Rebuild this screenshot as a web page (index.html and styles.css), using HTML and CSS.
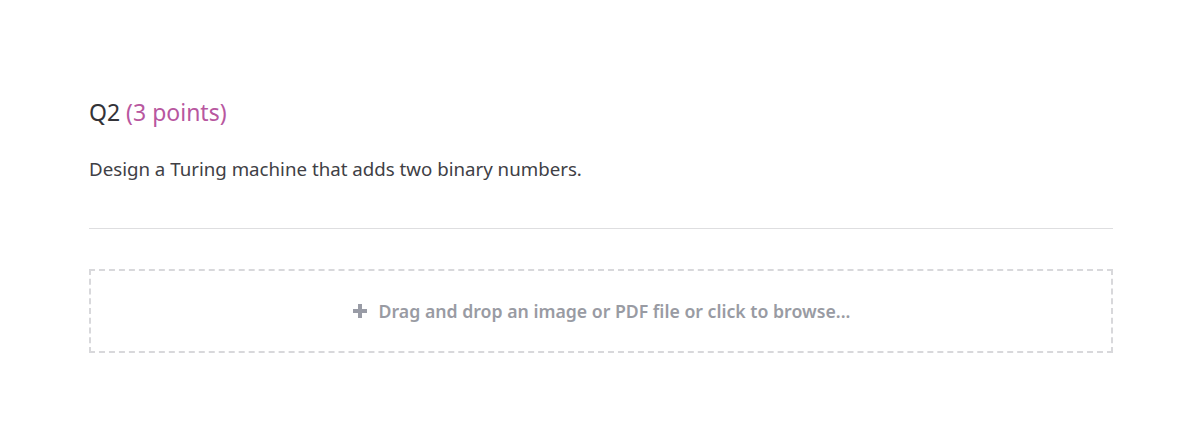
FILE: index.html
```html
<!DOCTYPE html>
<html>
<head>
<meta charset="utf-8">
<link rel="stylesheet" href="styles.css">
</head>
<body>
<div class="question">
  <h2 class="q-title">Q2 <span class="q-points">(3 points)</span></h2>
  <p class="q-text">Design a Turing machine that adds two binary numbers.</p>
  <hr class="q-rule">
  <div class="dropzone">
    <svg class="plus" width="16" height="16" viewBox="0 0 16 16"><path d="M6 1h4v5h5v4h-5v5H6v-5H1V6h5z" fill="#999ca6"/></svg>
    <span class="dz-text">Drag and drop an image or PDF file or click to browse...</span>
  </div>
</div>
</body>
</html>
```
FILE: styles.css
```css
html, body { margin: 0; padding: 0; background: #fff; }
body { font-family: "Noto Sans", "Open Sans", sans-serif; color: #3a3a3e; }
.question { width: 1024px; margin-left: 89px; padding-top: 95px; }
.q-title { margin: 0; font-size: 23px; font-weight: 400; line-height: 34px; color: #333338; }
.q-points { color: #b8579f; }
.q-text { margin: 26px 0 0; font-size: 18.7px; line-height: 28px; color: #404045; }
.q-rule { margin: 45px 0 0; border: 0; border-top: 1px solid #dedee0; height: 0; }
.dropzone { margin-top: 40px; height: 80px; border: 2px dashed #d8d8db; display: flex; align-items: center; justify-content: center; gap: 11px; }
.plus { display: block; }
.dz-text { font-size: 17.7px; font-weight: 600; color: #999ba3; }
```
